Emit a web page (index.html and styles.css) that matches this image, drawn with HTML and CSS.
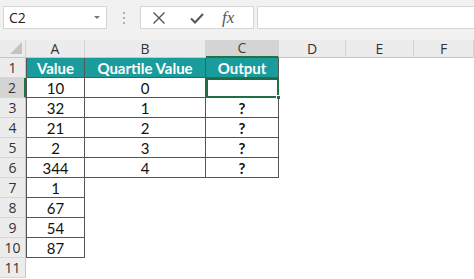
FILE: index.html
```html
<!DOCTYPE html>
<html>
<head>
<meta charset="utf-8">
<link rel="stylesheet" href="styles.css">
</head>
<body>
<div class="toolbar">
  <div class="namebox"><span class="ref">C2</span><span class="caret"></span></div>
  <div class="dots"><i></i><i></i><i></i></div>
  <div class="fbtns">
    <svg class="ico" width="14" height="14" viewBox="0 0 14 14"><path d="M1.5 1.5L12.5 12.5M12.5 1.5L1.5 12.5" stroke="#555" stroke-width="1.4" fill="none"/></svg>
    <svg class="ico" width="16" height="14" viewBox="0 0 16 14"><path d="M2 7.5L6 11.5L14 3" stroke="#555" stroke-width="2" fill="none"/></svg>
    <span class="fx">fx</span>
  </div>
  <div class="finput"></div>
</div>
<div class="sheet">
  <div class="corner"><span class="tri"></span></div>
  <div class="ch">A</div><div class="ch">B</div><div class="ch sel">C</div><div class="ch">D</div><div class="ch">E</div><div class="ch">F</div>

  <div class="rh">1</div>
  <div class="c th a">Value</div><div class="c th">Quartile Value</div><div class="c th">Output</div><div class="e"></div><div class="e"></div><div class="e"></div>

  <div class="rh rsel">2</div>
  <div class="c a">10</div><div class="c">0</div><div class="c active"><span class="handle"></span></div><div class="e"></div><div class="e"></div><div class="e"></div>

  <div class="rh">3</div>
  <div class="c a">32</div><div class="c">1</div><div class="c q">?</div><div class="e"></div><div class="e"></div><div class="e"></div>

  <div class="rh">4</div>
  <div class="c a">21</div><div class="c">2</div><div class="c q">?</div><div class="e"></div><div class="e"></div><div class="e"></div>

  <div class="rh">5</div>
  <div class="c a">2</div><div class="c">3</div><div class="c q">?</div><div class="e"></div><div class="e"></div><div class="e"></div>

  <div class="rh">6</div>
  <div class="c a">344</div><div class="c">4</div><div class="c q">?</div><div class="e"></div><div class="e"></div><div class="e"></div>

  <div class="rh">7</div>
  <div class="c a">1</div><div class="e"></div><div class="e"></div><div class="e"></div><div class="e"></div><div class="e"></div>

  <div class="rh">8</div>
  <div class="c a">67</div><div class="e"></div><div class="e"></div><div class="e"></div><div class="e"></div><div class="e"></div>

  <div class="rh">9</div>
  <div class="c a">54</div><div class="e"></div><div class="e"></div><div class="e"></div><div class="e"></div><div class="e"></div>

  <div class="rh">10</div>
  <div class="c a">87</div><div class="e"></div><div class="e"></div><div class="e"></div><div class="e"></div><div class="e"></div>

  <div class="rh">11</div>
  <div class="e"></div><div class="e"></div><div class="e"></div><div class="e"></div><div class="e"></div><div class="e"></div>
</div>
</body>
</html>
```
FILE: styles.css
```css
* { box-sizing: border-box; margin: 0; padding: 0; }
html, body { width: 474px; height: 279px; overflow: hidden; background: #fff; }
body { font-family: "Open Sans", "Noto Sans", sans-serif; }

.toolbar {
  height: 40px;
  background: #f1f1f1;
  display: flex;
  align-items: flex-start;
  padding: 6px 0 0 3px;
}
.namebox {
  width: 104px; height: 23px;
  background: #fff;
  border: 1px solid #d6d6d6;
  display: flex; align-items: center; justify-content: space-between;
  padding: 0 6px 0 5px;
}
.ref { font-size: 14px; color: #222; }
.caret {
  width: 0; height: 0;
  border-left: 3px solid transparent; border-right: 3px solid transparent;
  border-top: 3px solid #777;
}
.dots {
  width: 33px; height: 23px;
  display: flex; flex-direction: column; align-items: center; justify-content: center; gap: 3px;
}
.dots i { width: 2px; height: 2px; background: #b0b0b0; display: block; }
.fbtns {
  width: 114px; height: 23px;
  background: #fff;
  border: 1px solid #d6d6d6;
  display: flex; align-items: center;
  padding-left: 11px;
}
.fbtns .ico:first-child { margin-right: 23px; }
.fbtns .ico:nth-child(2) { margin-right: 17px; }
.fx {
  font-family: "Liberation Serif", serif; font-style: italic;
  font-size: 17px; color: #555;
}
.finput {
  flex: 1; height: 23px; margin-left: 3px;
  background: #fff; border: 1px solid #d6d6d6; border-right: none;
}

.sheet {
  display: grid;
  grid-template-columns: 26px 59px 121px 73px 67px 68px 60px;
  grid-template-rows: 18px repeat(11, 20px);
}
.corner {
  background: #ececec;
  border-right: 1px solid #d4d4d4;
  border-bottom: 1px solid #c6c6c6;
  position: relative;
}
.tri {
  position: absolute; right: 3px; bottom: 3px;
  width: 0; height: 0;
  border-left: 12px solid transparent;
  border-bottom: 12px solid #c4c4c4;
}
.ch {
  background: #ececec;
  border-right: 1px solid #d4d4d4;
  border-bottom: 1px solid #c6c6c6;
  font-size: 14px; color: #333;
  display: flex; align-items: center; justify-content: center;
  line-height: 1;
}
.ch.sel { background: #d4d4d4; border-bottom: 2px solid #217346; color: #444; }
.rh {
  background: #ececec;
  border-right: 1px solid #c6c6c6;
  border-bottom: 1px solid #d6d6d6;
  font-size: 14px; color: #333;
  display: flex; align-items: center; justify-content: center;
}
.rh.rsel { background: #d4d4d4; border-right: 2px solid #217346; }

.c {
  border-right: 1px solid #555;
  border-bottom: 1px solid #555;
  font-family: "Lato", "Open Sans", sans-serif;
  font-size: 15px; color: #111;
  display: flex; align-items: center; justify-content: center;
  position: relative;
}
.c.a { border-left: 1px solid #555; }
.c.th { background: #1b9c9c; color: #fff; font-weight: 700; }
.c.q { font-weight: 700; }
.c.active { outline: 2px solid #1f6e45; outline-offset: -2px; }
.handle {
  position: absolute; right: -3px; bottom: -3px;
  width: 5px; height: 5px; background: #1f6e45; border: 1px solid #fff;
}
.e { background: #fff; }
```
